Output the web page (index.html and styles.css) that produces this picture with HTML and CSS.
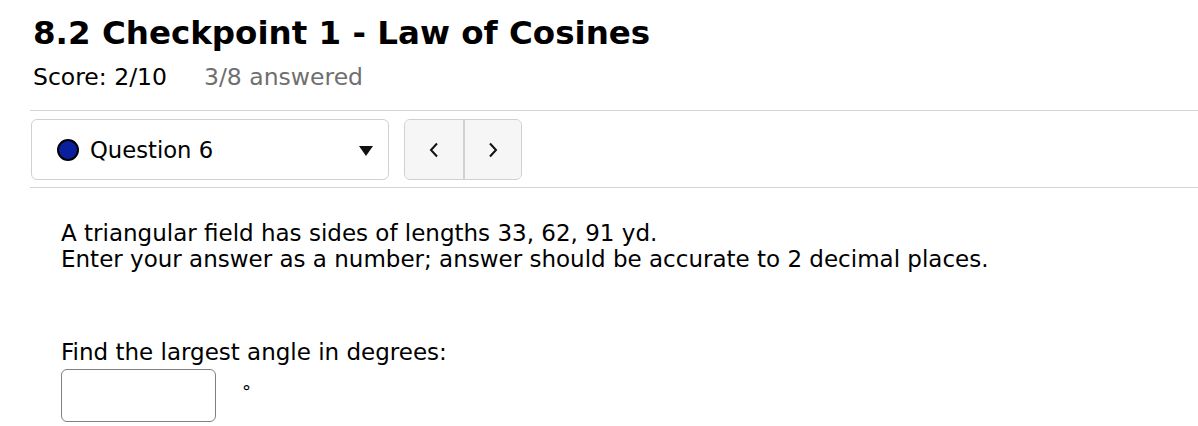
FILE: index.html
```html
<!DOCTYPE html>
<html>
<head>
<meta charset="utf-8">
<link rel="stylesheet" href="styles.css">
</head>
<body>
<div class="page">
  <h1 class="title">8.2 Checkpoint 1 - Law of Cosines</h1>
  <div class="scoreline"><span class="score">Score: 2/10</span><span class="answered">3/8 answered</span></div>
  <div class="navbar">
    <div class="select">
      <span class="dot"></span>
      <span class="qlabel">Question 6</span>
      <span class="caret"></span>
    </div>
    <div class="navbtns">
      <button class="nav">
        <svg width="10" height="16" viewBox="0 0 10 16"><path d="M8 1.5 L2 8 L8 14.5" fill="none" stroke="#111" stroke-width="2"/></svg>
      </button>
      <button class="nav">
        <svg width="10" height="16" viewBox="0 0 10 16"><path d="M2 1.5 L8 8 L2 14.5" fill="none" stroke="#111" stroke-width="2"/></svg>
      </button>
    </div>
  </div>
  <div class="question">
    <p class="prompt">A triangular field has sides of lengths 33, 62, 91 yd.<br>Enter your answer as a number; answer should be accurate to 2 decimal places.</p>
    <p class="find">Find the largest angle in degrees:</p>
    <div class="answer"><input class="inp" type="text"><span class="deg">°</span></div>
  </div>
</div>
</body>
</html>
```
FILE: styles.css
```css
html, body { margin: 0; padding: 0; background: #fff; }
body { font-family: "DejaVu Sans", "Verdana", sans-serif; color: #000; }
.page { padding: 13px 0 0 30px; }
.title { margin: 0 0 0 3px; font-size: 32.5px; font-weight: 700; line-height: 40px; }
.scoreline { margin: 10px 0 0 3px; font-size: 23.5px; line-height: 28px; display: flex; gap: 37px; }
.answered { color: #6f6f6f; }
.navbar { margin-top: 19px; border-top: 1px solid #d4d4d4; border-bottom: 1px solid #d4d4d4; padding: 8px 0 7px 1px; display: flex; gap: 15px; }
.select { width: 358px; height: 61px; border: 1px solid #d0d0d0; border-radius: 6px; display: flex; align-items: center; box-sizing: border-box; padding: 0 15px 0 25px; }
.dot { width: 22px; height: 22px; border-radius: 50%; background: #0a1f9e; border: 2px solid #000; box-sizing: border-box; margin-right: 11px; }
.qlabel { font-size: 22.7px; flex: 1; line-height: 28px; }
.caret { width: 0; height: 0; border-left: 7px solid transparent; border-right: 7px solid transparent; border-top: 10px solid #111; margin-top: 2px; }
.navbtns { display: flex; border: 1px solid #d0d0d0; border-radius: 6px; overflow: hidden; background: #f6f6f6; height: 61px; box-sizing: border-box; }
.nav { width: 58px; border: 0; background: #f6f6f6; display: flex; align-items: center; justify-content: center; padding: 0; }
.nav + .nav { border-left: 2px solid #d0d0d0; }
.question { padding: 0 0 0 31px; font-size: 23px; }
.prompt { margin: 32px 0 0 0; line-height: 26px; }
.find { margin: 67px 0 0 0; line-height: 26px; }
.answer { display: flex; align-items: flex-start; margin-top: 4px; }
.inp { width: 155px; height: 53px; box-sizing: border-box; border: 1px solid #808080; border-radius: 6px; margin: 0; background: #fff; }
.deg { margin-left: 26px; margin-top: 13px; font-size: 18px; line-height: 20px; }
```
